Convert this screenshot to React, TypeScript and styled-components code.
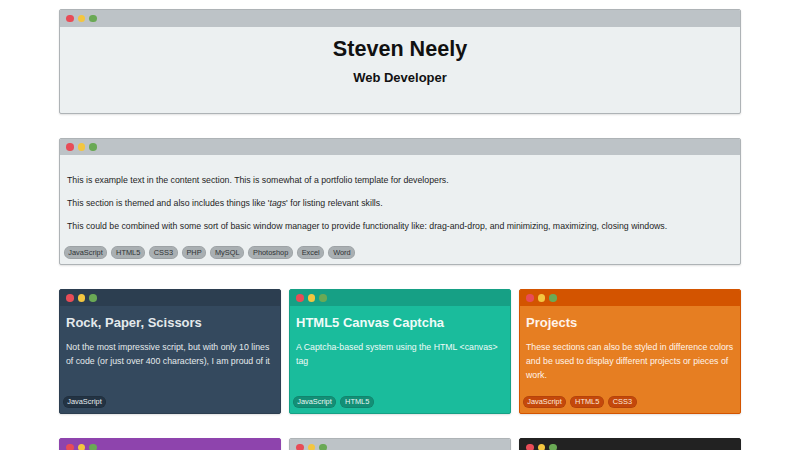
import styled, { createGlobalStyle } from "styled-components";

const GlobalStyle = createGlobalStyle`
  body {
    margin: 0;
    background: #ffffff;
    font-family: "Liberation Sans", Arial, sans-serif;
    font-size: 8.75px;
    color: #222;
  }
`;

type Theme = {
  bar: string;
  body: string;
  text: string;
  tag: string;
  tagText: string;
  border: string;
};

const themes: Record<string, Theme> = {
  light: {
    bar: "#bdc3c7",
    body: "#ecf0f1",
    text: "#1e1e1e",
    tag: "#a9afb2",
    tagText: "#2f3335",
    border: "#aeb3b6",
  },
  asphalt: {
    bar: "#2c3e50",
    body: "#34495e",
    text: "#e4e9ec",
    tag: "#233343",
    tagText: "#e6ebee",
    border: "#2c3e50",
  },
  turquoise: {
    bar: "#16a085",
    body: "#1abc9c",
    text: "#effbf8",
    tag: "#138f76",
    tagText: "#e8f7f3",
    border: "#16a085",
  },
  carrot: {
    bar: "#d35400",
    body: "#e67e22",
    text: "#fff4ea",
    tag: "#c4480b",
    tagText: "#fde9dc",
    border: "#d35400",
  },
  wisteria: {
    bar: "#8e44ad",
    body: "#9b59b6",
    text: "#f7eefb",
    tag: "#7d3c98",
    tagText: "#f3e6f8",
    border: "#8e44ad",
  },
  dark: {
    bar: "#222222",
    body: "#2d2d2d",
    text: "#eeeeee",
    tag: "#1a1a1a",
    tagText: "#dddddd",
    border: "#222222",
  },
};

const Page = styled.main`
  max-width: 682px;
  margin: 9px auto 0;
  display: flex;
  flex-direction: column;
  gap: 24px;
`;

const Window = styled.section<{ $theme: Theme }>`
  display: flex;
  flex-direction: column;
  background: ${(p) => p.$theme.body};
  color: ${(p) => p.$theme.text};
  border: 1px solid ${(p) => p.$theme.border};
  border-radius: 2px;
  box-shadow: 0 1px 2px rgba(0, 0, 0, 0.12);
  overflow: hidden;
`;

const TitleBar = styled.div<{ $theme: Theme }>`
  height: 16.5px;
  background: ${(p) => p.$theme.bar};
  display: flex;
  align-items: center;
  gap: 4px;
  padding: 0 6px;
  flex-shrink: 0;
`;

const Dot = styled.span<{ $color: string }>`
  width: 7.5px;
  height: 7.5px;
  border-radius: 50%;
  background: ${(p) => p.$color};
`;

const Header = styled.div`
  padding: 9px 8px 28px;
  text-align: center;
`;

const Name = styled.h1`
  margin: 0 0 8px;
  font-size: 21.6px;
  font-weight: bold;
  color: #111;
`;

const Role = styled.h2`
  margin: 0;
  font-size: 13px;
  font-weight: bold;
  color: #111;
`;

const Content = styled.div<{ $card?: boolean }>`
  padding: ${(p) => (p.$card ? "9px 6px 5px" : "18px 7px 5px")};
  display: flex;
  flex-direction: column;
  flex: 1;
`;

const Text = styled.p`
  margin: 0 0 8.75px;
  line-height: 14px;
`;

const CardTitle = styled.h2`
  margin: 0 0 9.5px;
  font-size: 13px;
  font-weight: bold;
  line-height: 15px;
`;

const Tags = styled.div`
  display: flex;
  flex-wrap: wrap;
  gap: 4px;
  margin: auto 0 0 -3.5px;
  padding-top: 5px;
`;

const Tag = styled.span<{ $theme: Theme }>`
  display: inline-flex;
  align-items: center;
  height: 12.5px;
  padding: 0 4.7px;
  border-radius: 7px;
  font-size: 7.4px;
  background: ${(p) => p.$theme.tag};
  color: ${(p) => p.$theme.tagText};
  box-shadow: inset 0 0 0 0.5px rgba(0, 0, 0, 0.14);
`;

const CardGrid = styled.div`
  display: grid;
  grid-template-columns: repeat(3, 1fr);
  gap: 24px 8px;
`;

const Card = styled(Window)`
  min-height: 124px;
  box-sizing: border-box;
`;

function Bar({ theme }: { theme: Theme }) {
  return (
    <TitleBar $theme={theme}>
      <Dot $color="#e84c57" />
      <Dot $color="#f3c640" />
      <Dot $color="#6aa955" />
    </TitleBar>
  );
}

const cards = [
  {
    theme: themes.asphalt,
    title: "Rock, Paper, Scissors",
    text: "Not the most impressive script, but with only 10 lines of code (or just over 400 characters), I am proud of it",
    tags: ["JavaScript"],
  },
  {
    theme: themes.turquoise,
    title: "HTML5 Canvas Captcha",
    text: "A Captcha-based system using the HTML <canvas> tag",
    tags: ["JavaScript", "HTML5"],
  },
  {
    theme: themes.carrot,
    title: "Projects",
    text: "These sections can also be styled in difference colors and be used to display different projects or pieces of work.",
    tags: ["JavaScript", "HTML5", "CSS3"],
  },
  {
    theme: themes.wisteria,
    title: "Window Manager",
    text: "Drag-and-drop windows with minimizing, maximizing and closing.",
    tags: ["JavaScript"],
  },
  {
    theme: themes.light,
    title: "Portfolio",
    text: "A simple themed portfolio template for developers.",
    tags: ["HTML5", "CSS3"],
  },
  {
    theme: themes.dark,
    title: "Terminal",
    text: "A dark themed section for command line projects.",
    tags: ["PHP", "MySQL"],
  },
];

const skills = ["JavaScript", "HTML5", "CSS3", "PHP", "MySQL", "Photoshop", "Excel", "Word"];

export default function App() {
  return (
    <>
      <GlobalStyle />
      <Page>
        <Window $theme={themes.light}>
          <Bar theme={themes.light} />
          <Header>
            <Name>Steven Neely</Name>
            <Role>Web Developer</Role>
          </Header>
        </Window>

        <Window $theme={themes.light}>
          <Bar theme={themes.light} />
          <Content>
            <Text>
              This is example text in the content section. This is somewhat of a portfolio
              template for developers.
            </Text>
            <Text>
              This section is themed and also includes things like '<em>tags</em>' for listing
              relevant skills.
            </Text>
            <Text>
              This could be combined with some sort of basic window manager to provide
              functionality like: drag-and-drop, and minimizing, maximizing, closing windows.
            </Text>
            <Tags>
              {skills.map((s) => (
                <Tag key={s} $theme={themes.light}>
                  {s}
                </Tag>
              ))}
            </Tags>
          </Content>
        </Window>

        <CardGrid>
          {cards.map((c) => (
            <Card key={c.title} $theme={c.theme}>
              <Bar theme={c.theme} />
              <Content $card>
                <CardTitle>{c.title}</CardTitle>
                <Text>{c.text}</Text>
                <Tags>
                  {c.tags.map((t) => (
                    <Tag key={t} $theme={c.theme}>
                      {t}
                    </Tag>
                  ))}
                </Tags>
              </Content>
            </Card>
          ))}
        </CardGrid>
      </Page>
    </>
  );
}
